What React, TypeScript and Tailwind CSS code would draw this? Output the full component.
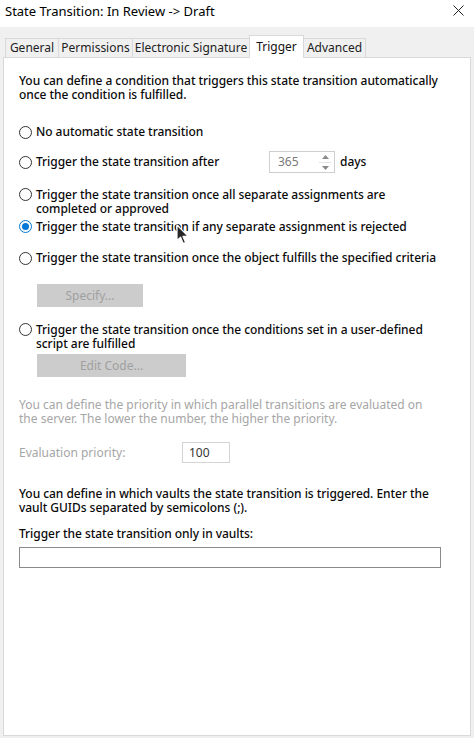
import React from 'react';

const font = { fontFamily: '"Noto Sans", "Open Sans", sans-serif' };

function Radio({ checked }: { checked?: boolean }) {
  return checked ? (
    <span className="flex h-[13px] w-[13px] shrink-0 items-center justify-center rounded-full border border-[#0078d7] bg-white">
      <span className="h-[7px] w-[7px] rounded-full bg-[#0078d7]" />
    </span>
  ) : (
    <span className="h-[13px] w-[13px] shrink-0 rounded-full border border-[#333333] bg-white" />
  );
}

function Option({
  label,
  checked,
  className,
}: {
  label: React.ReactNode;
  checked?: boolean;
  className?: string;
}) {
  return (
    <div className={`flex items-start gap-[4px] ${className ?? ''}`}>
      <span className="flex h-[14px] items-center">
        <Radio checked={checked} />
      </span>
      <span className="text-[#0a0a0a]">{label}</span>
    </div>
  );
}

function DisabledButton({ label, width }: { label: string; width: string }) {
  return (
    <div
      className={`${width} ml-[18px] flex h-[23px] items-center justify-center border border-[#cccccc] bg-[#cccccc] font-normal tracking-normal text-[#a0a0a0]`}
    >
      {label}
    </div>
  );
}

const tabs = [
  { label: 'General', w: 'w-[53px]', cls: 'border-l' },
  { label: 'Permissions', w: 'w-[74px]', cls: 'border-l' },
  { label: 'Electronic Signature', w: 'w-[117px]', cls: 'border-l' },
  { label: 'Trigger', w: 'w-[55px]', cls: 'border-x', active: true },
  { label: 'Advanced', w: 'w-[62px]', cls: 'border-r' },
];

export default function App() {
  return (
    <div
      className="flex h-[738px] w-[474px] flex-col overflow-hidden bg-[#f0f0f0] text-[12px] leading-[14px]"
      style={font}
    >
      {/* title bar */}
      <div className="flex h-[27px] shrink-0 items-start justify-between bg-white pl-[5px] pr-[10px] pt-[2px]">
        <span className="text-[13px] leading-[18px] text-black">
          State Transition: In Review -&gt; Draft
        </span>
        <svg width="11" height="11" viewBox="0 0 11 11" className="mt-[3px]">
          <path d="M0.5 0.5 L10.5 10.5 M10.5 0.5 L0.5 10.5" stroke="#222" strokeWidth="1" />
        </svg>
      </div>

      {/* tabs */}
      <div className="flex h-[30px] shrink-0 items-end pl-[5px]">
        {tabs.map((t) =>
          t.active ? (
            <div
              key={t.label}
              className={`${t.w} ${t.cls} relative z-10 -mb-px flex h-[23px] items-start justify-center border-t border-[#d9d9d9] bg-white pt-[4px] text-[#111]`}
            >
              {t.label}
            </div>
          ) : (
            <div
              key={t.label}
              className={`${t.w} ${t.cls} flex h-[19px] items-center justify-center border-t border-[#d9d9d9] bg-[#f0f0f0] text-[#222]`}
            >
              {t.label}
            </div>
          )
        )}
      </div>

      {/* panel */}
      <div className="relative mx-[3px] flex h-[679px] shrink-0 flex-col border border-[#d9d9d9] bg-white pl-[15px] pr-[20px] font-medium tracking-[-0.05px]">
        <p className="mt-[15.5px] text-[#0a0a0a]">
          You can define a condition that triggers this state transition automatically once the
          condition is fulfilled.
        </p>

        <Option className="mt-[23.5px]" label="No automatic state transition" />

        <div className="mt-[12px] flex h-[22px] items-center">
          <Option className="w-[250px]" label="Trigger the state transition after" />
          <div className="flex h-[22px] w-[66px] items-stretch border border-[#cfcfcf] bg-white font-normal tracking-normal">
            <span className="flex flex-1 items-center pl-[8px] text-[#7a7a7a]">365</span>
            <span className="flex w-[18px] flex-col items-center justify-center gap-[3px]">
              <svg width="7" height="4" viewBox="0 0 7 4">
                <path d="M0 4 L3.5 0 L7 4 Z" fill="#8a8a8a" />
              </svg>
              <span className="h-px w-[12px] bg-[#e3e3e3]" />
              <svg width="7" height="4" viewBox="0 0 7 4">
                <path d="M0 0 L3.5 4 L7 0 Z" fill="#8a8a8a" />
              </svg>
            </span>
          </div>
          <span className="ml-[5px] text-[#0a0a0a]">days</span>
        </div>

        <Option
          className="mt-[14.5px]"
          label={
            <>
              Trigger the state transition once all separate assignments are
              <br />
              completed or approved
            </>
          }
        />

        <Option
          className="mt-[4px]"
          checked
          label="Trigger the state transition if any separate assignment is rejected"
        />

        <Option
          className="mt-[17.5px]"
          label="Trigger the state transition once the object fulfills the specified criteria"
        />

        <div className="mt-[19px]">
          <DisabledButton label="Specify..." width="w-[106px]" />
        </div>

        <Option
          className="mt-[15.5px]"
          label={
            <>
              Trigger the state transition once the conditions set in a user-defined
              <br />
              script are fulfilled
            </>
          }
        />

        <div className="mt-[3.5px]">
          <DisabledButton label="Edit Code..." width="w-[149px]" />
        </div>

        <p className="mt-[20.5px] font-normal tracking-normal text-[#a6a6a6]">
          You can define the priority in which parallel transitions are evaluated on
          <br />
          the server. The lower the number, the higher the priority.
        </p>

        <div className="mt-[16.5px] flex h-[21px] items-center font-normal tracking-normal">
          <span className="w-[163px] text-[#a6a6a6]">Evaluation priority:</span>
          <div className="flex h-[21px] w-[48px] items-center border border-[#d4d4d4] pl-[6px] text-[#333]">
            100
          </div>
        </div>

        <p className="mt-[23.5px] text-[#0a0a0a]">
          You can define in which vaults the state transition is triggered. Enter the
          <br />
          vault GUIDs separated by semicolons (;).
        </p>

        <p className="mt-[12px] text-[#0a0a0a]">Trigger the state transition only in vaults:</p>

        <div className="mt-[6.5px] h-[21px] w-[422px] border border-[#8a8a8a] bg-white" />

        {/* mouse pointer */}
        <svg
          className="absolute left-[172px] top-[166px]"
          width="14"
          height="21"
          viewBox="0 0 14 21"
        >
          <path
            d="M1 1 L1 16.5 L4.6 13.2 L7.2 19.5 L9.6 18.5 L7 12.4 L12.2 12.4 Z"
            fill="#262626"
            stroke="#ffffff"
            strokeWidth="1.2"
            strokeLinejoin="round"
          />
        </svg>
      </div>
    </div>
  );
}
